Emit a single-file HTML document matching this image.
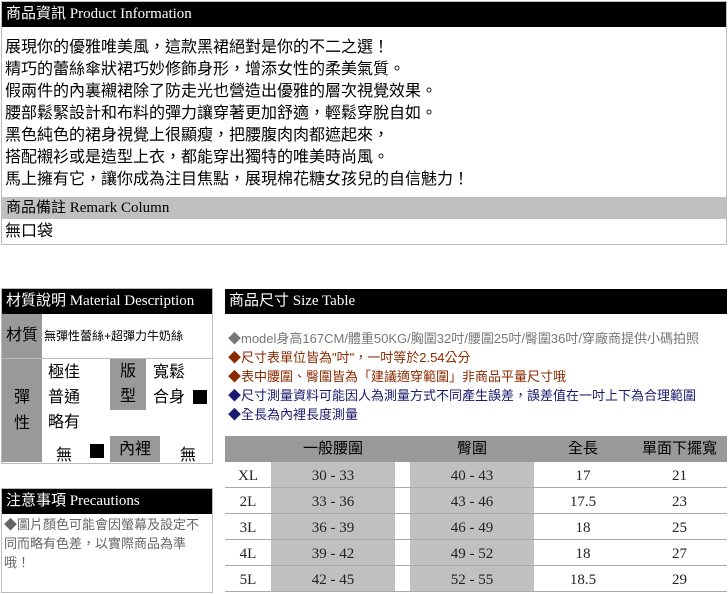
<!DOCTYPE html>
<html><head><meta charset="utf-8"><style>
*{margin:0;padding:0;box-sizing:border-box}
body{width:728px;height:594px;background:#fff;position:relative;font-family:"Liberation Serif","Noto Sans CJK TC",serif;color:#000;overflow:hidden}
.a{position:absolute}
.hd{background:#000;color:#fff;font-size:15px;line-height:25px;padding-left:4px;white-space:nowrap}
.g{background:#999}
.cj{font-family:"Liberation Sans","Noto Sans CJK TC",sans-serif}
.t{white-space:nowrap}
</style></head><body>
<div class="a" style="left:1px;top:1px;width:726px;height:244px;border:1px solid #bbb"></div>
<div class="a hd" style="left:2px;top:2px;width:724px;height:25px">商品資訊 Product Information</div>
<div class="a cj" style="left:5px;top:37px;font-size:16px;line-height:22px;white-space:nowrap">展現你的優雅唯美風，這款黑裙絕對是你的不二之選！<br>精巧的蕾絲傘狀裙巧妙修飾身形，增添女性的柔美氣質。<br>假兩件的內裏襯裙除了防走光也營造出優雅的層次視覺效果。<br>腰部鬆緊設計和布料的彈力讓穿著更加舒適，輕鬆穿脫自如。<br>黑色純色的裙身視覺上很顯瘦，把腰腹肉肉都遮起來，<br>搭配襯衫或是造型上衣，都能穿出獨特的唯美時尚風。<br>馬上擁有它，讓你成為注目焦點，展現棉花糖女孩兒的自信魅力！</div>
<div class="a t" style="left:2px;top:197px;width:724px;height:22px;background:#c0c0c0;font-size:15px;line-height:22px;padding-left:4px">商品備註 Remark Column</div>
<div class="a cj" style="left:5px;top:222px;font-size:16px;line-height:20px">無口袋</div>

<div class="a" style="left:1px;top:288px;width:212px;height:176px;border:1px solid #bbb"></div>
<div class="a hd" style="left:2px;top:289px;width:210px">材質說明 Material Description</div>
<div class="a g cj" style="left:2px;top:314px;width:40px;height:44px;font-size:16px;line-height:44px;text-align:center">材質</div>
<div class="a cj t" style="left:44px;top:314px;font-size:12px;line-height:44px">無彈性蕾絲+超彈力牛奶絲</div>
<div class="a" style="left:2px;top:358px;width:210px;height:1px;background:#bbb"></div>
<div class="a g cj" style="left:2px;top:359px;width:40px;height:103px;font-size:16px;line-height:26px;padding-top:26px;text-align:center">彈<br>性</div>
<div class="a cj" style="left:48px;top:360px;font-size:16px;line-height:25px">極佳<br>普通<br>略有</div>
<div class="a cj" style="left:56px;top:441px;font-size:16px">無</div>
<div class="a" style="left:90px;top:444px;width:14px;height:14px;background:#000"></div>
<div class="a g cj" style="left:110px;top:359px;width:36px;height:51px;font-size:16px;line-height:25px;text-align:center">版<br>型</div>
<div class="a cj" style="left:153px;top:360px;font-size:16px;line-height:25px">寬鬆<br>合身</div>
<div class="a" style="left:193px;top:390px;width:14px;height:14px;background:#000"></div>
<div class="a g cj" style="left:110px;top:436px;width:50px;height:26px;font-size:16px;line-height:28px;text-align:center">內裡</div>
<div class="a cj" style="left:180px;top:441px;font-size:16px">無</div>

<div class="a" style="left:1px;top:488px;width:212px;height:105px;border:1px solid #bbb"></div>
<div class="a hd" style="left:2px;top:489px;width:210px">注意事項 Precautions</div>
<div class="a cj" style="left:4px;top:515px;width:204px;font-size:13px;line-height:19px;color:#666">◆圖片顏色可能會因螢幕及設定不同而略有色差，以實際商品為準哦！</div>

<div class="a hd" style="left:225px;top:289px;width:502px">商品尺寸 Size Table</div>
<div class="a cj t" style="left:228px;top:329px;font-size:13px;line-height:19px">
<div style="color:#777">◆model身高167CM/體重50KG/胸圍32吋/腰圍25吋/臀圍36吋/穿廠商提供小碼拍照</div>
<div style="color:#8b2a00">◆尺寸表單位皆為"吋"，一吋等於2.54公分</div>
<div style="color:#8b2a00">◆表中腰圍、臀圍皆為「建議適穿範圍」非商品平量尺寸哦</div>
<div style="color:#1a1a6e">◆尺寸測量資料可能因人為測量方式不同產生誤差，誤差值在一吋上下為合理範圍</div>
<div style="color:#1a1a6e">◆全長為內裡長度測量</div>
</div>
<div class="a g" style="left:225px;top:436px;width:502px;height:26px"></div>
<div class="a" style="left:271px;top:462px;width:124px;height:130px;background:#c0c0c0"></div>
<div class="a" style="left:410px;top:462px;width:124px;height:130px;background:#c0c0c0"></div>
<div class="a cj t" style="left:225px;top:436px;width:502px;font-size:15px;line-height:26px">
<span class="a" style="left:46px;width:124px;text-align:center">一般腰圍</span>
<span class="a" style="left:185px;width:124px;text-align:center">臀圍</span>
<span class="a" style="left:309px;width:98px;text-align:center">全長</span>
<span class="a" style="left:407px;width:95px;text-align:center">單面下擺寬</span>
</div>
<div id="rows"></div>
<div class="a" style="left:225px;top:462px;width:502px;font-size:15px;color:#222">
<div style="position:relative;height:26px;line-height:28px;border-bottom:1px solid #aaa"><span class="a" style="left:0;width:46px;text-align:center">XL</span><span class="a" style="left:46px;width:124px;text-align:center">30 - 33</span><span class="a" style="left:185px;width:124px;text-align:center">40 - 43</span><span class="a" style="left:309px;width:98px;text-align:center">17</span><span class="a" style="left:407px;width:95px;text-align:center">21</span></div>
<div style="position:relative;height:26px;line-height:28px;border-bottom:1px solid #aaa"><span class="a" style="left:0;width:46px;text-align:center">2L</span><span class="a" style="left:46px;width:124px;text-align:center">33 - 36</span><span class="a" style="left:185px;width:124px;text-align:center">43 - 46</span><span class="a" style="left:309px;width:98px;text-align:center">17.5</span><span class="a" style="left:407px;width:95px;text-align:center">23</span></div>
<div style="position:relative;height:26px;line-height:28px;border-bottom:1px solid #aaa"><span class="a" style="left:0;width:46px;text-align:center">3L</span><span class="a" style="left:46px;width:124px;text-align:center">36 - 39</span><span class="a" style="left:185px;width:124px;text-align:center">46 - 49</span><span class="a" style="left:309px;width:98px;text-align:center">18</span><span class="a" style="left:407px;width:95px;text-align:center">25</span></div>
<div style="position:relative;height:26px;line-height:28px;border-bottom:1px solid #aaa"><span class="a" style="left:0;width:46px;text-align:center">4L</span><span class="a" style="left:46px;width:124px;text-align:center">39 - 42</span><span class="a" style="left:185px;width:124px;text-align:center">49 - 52</span><span class="a" style="left:309px;width:98px;text-align:center">18</span><span class="a" style="left:407px;width:95px;text-align:center">27</span></div>
<div style="position:relative;height:26px;line-height:28px;border-bottom:1px solid #aaa"><span class="a" style="left:0;width:46px;text-align:center">5L</span><span class="a" style="left:46px;width:124px;text-align:center">42 - 45</span><span class="a" style="left:185px;width:124px;text-align:center">52 - 55</span><span class="a" style="left:309px;width:98px;text-align:center">18.5</span><span class="a" style="left:407px;width:95px;text-align:center">29</span></div>
</div>
</body></html>
